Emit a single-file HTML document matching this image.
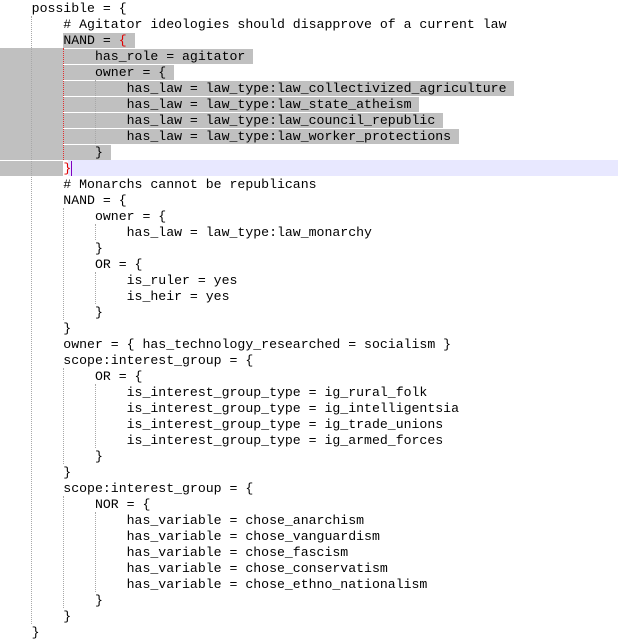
<!DOCTYPE html>
<html><head><meta charset="utf-8"><style>
body{margin:0;background:#fff;width:618px;height:643px;overflow:hidden;position:relative;font-family:"Liberation Mono",monospace;font-size:13.2px;}
.l{position:absolute;left:0;height:16px;line-height:17px;white-space:pre;color:#000;}
.s{background:#c0c0c0;}
.g{position:absolute;width:0;border-left:1px dotted #a8a8a8;}
.r{border-left-color:#e03030;}
</style></head><body>
<div style="position:absolute;left:68px;top:160px;width:550px;height:16px;background:#e8e8ff"></div>
<div style="position:absolute;left:0;top:48px;width:63px;height:112px;background:#c0c0c0"></div>
<div class="l" style="top:0">    possible = {</div>
<div class="l" style="top:16px">        # Agitator ideologies should disapprove of a current law</div>
<div class="l" style="top:32px">        <span class="s">NAND = <span style="color:#e00000">{</span> </span></div>
<div class="l" style="top:48px"><span class="s">            has_role = agitator </span></div>
<div class="l" style="top:64px"><span class="s">            owner = { </span></div>
<div class="l" style="top:80px"><span class="s">                has_law = law_type:law_collectivized_agriculture </span></div>
<div class="l" style="top:96px"><span class="s">                has_law = law_type:law_state_atheism </span></div>
<div class="l" style="top:112px"><span class="s">                has_law = law_type:law_council_republic </span></div>
<div class="l" style="top:128px"><span class="s">                has_law = law_type:law_worker_protections </span></div>
<div class="l" style="top:144px"><span class="s">            } </span></div>
<div class="l" style="top:160px"><span class="s">        </span><span style="color:#e00000">}</span><span style="border-left:1px solid #8000c0"></span></div>
<div class="l" style="top:176px">        # Monarchs cannot be republicans</div>
<div class="l" style="top:192px">        NAND = {</div>
<div class="l" style="top:208px">            owner = {</div>
<div class="l" style="top:224px">                has_law = law_type:law_monarchy</div>
<div class="l" style="top:240px">            }</div>
<div class="l" style="top:256px">            OR = {</div>
<div class="l" style="top:272px">                is_ruler = yes</div>
<div class="l" style="top:288px">                is_heir = yes</div>
<div class="l" style="top:304px">            }</div>
<div class="l" style="top:320px">        }</div>
<div class="l" style="top:336px">        owner = { has_technology_researched = socialism }</div>
<div class="l" style="top:352px">        scope:interest_group = {</div>
<div class="l" style="top:368px">            OR = {</div>
<div class="l" style="top:384px">                is_interest_group_type = ig_rural_folk</div>
<div class="l" style="top:400px">                is_interest_group_type = ig_intelligentsia</div>
<div class="l" style="top:416px">                is_interest_group_type = ig_trade_unions</div>
<div class="l" style="top:432px">                is_interest_group_type = ig_armed_forces</div>
<div class="l" style="top:448px">            }</div>
<div class="l" style="top:464px">        }</div>
<div class="l" style="top:480px">        scope:interest_group = {</div>
<div class="l" style="top:496px">            NOR = {</div>
<div class="l" style="top:512px">                has_variable = chose_anarchism</div>
<div class="l" style="top:528px">                has_variable = chose_vanguardism</div>
<div class="l" style="top:544px">                has_variable = chose_fascism</div>
<div class="l" style="top:560px">                has_variable = chose_conservatism</div>
<div class="l" style="top:576px">                has_variable = chose_ethno_nationalism</div>
<div class="l" style="top:592px">            }</div>
<div class="l" style="top:608px">        }</div>
<div class="l" style="top:624px">    }</div>

<div class="g" style="left:31px;top:16px;height:608px"></div>
<div class="g r" style="left:63px;top:48px;height:112px"></div>
<div class="g" style="left:63px;top:208px;height:112px"></div>
<div class="g" style="left:63px;top:368px;height:96px"></div>
<div class="g" style="left:63px;top:496px;height:112px"></div>
<div class="g" style="left:95px;top:80px;height:64px"></div>
<div class="g" style="left:95px;top:224px;height:16px"></div>
<div class="g" style="left:95px;top:272px;height:32px"></div>
<div class="g" style="left:95px;top:384px;height:64px"></div>
<div class="g" style="left:95px;top:512px;height:80px"></div>
</body></html>
